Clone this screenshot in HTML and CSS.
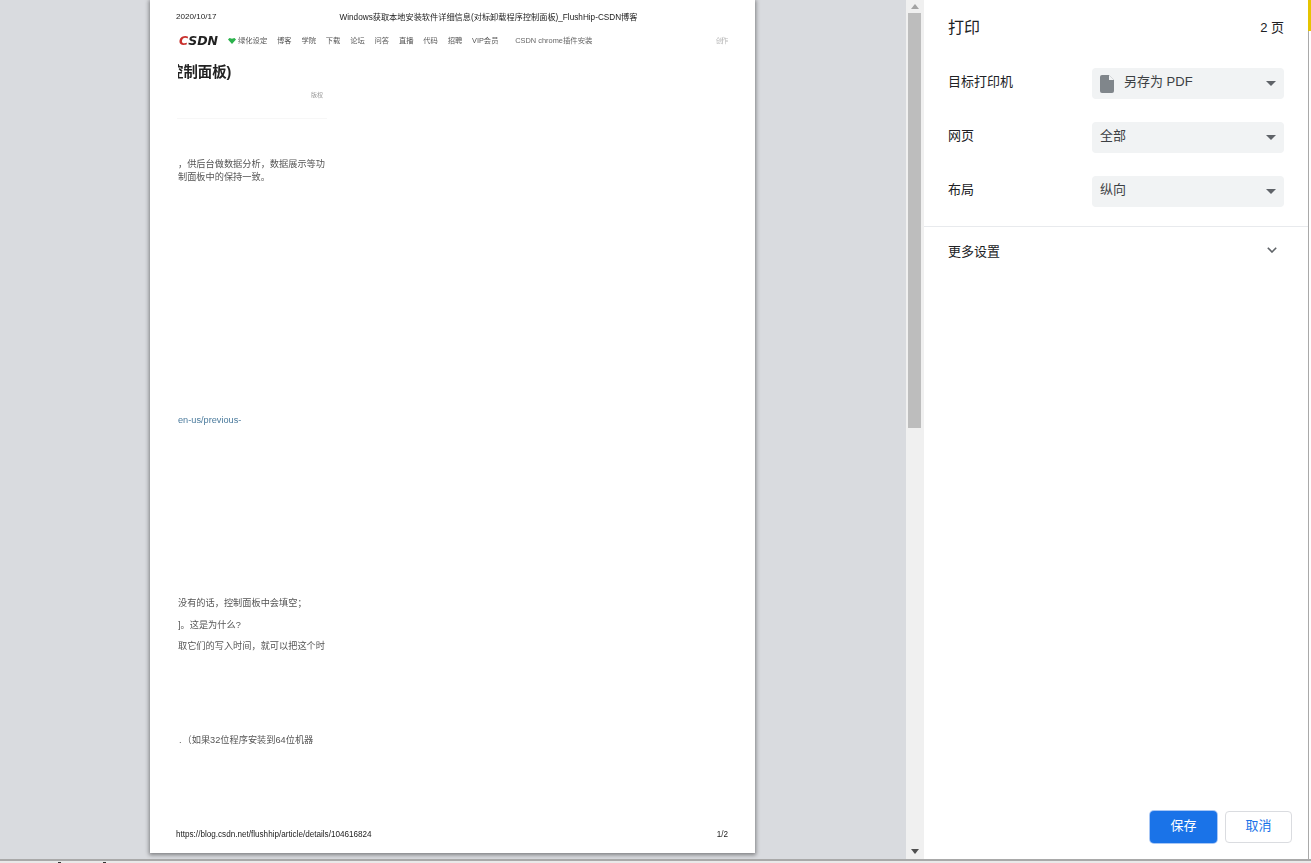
FILE: index.html
```html
<!DOCTYPE html>
<html lang="zh-CN">
<head>
<meta charset="utf-8">
<title>打印</title>
<link rel="stylesheet" href="styles.css">
</head>
<body>
<div class="window">
  <main class="preview">
    <div class="page-col">
      <article class="page">
        <div class="head"><span>2020/10/17</span><span class="doc-title">Windows获取本地安装软件详细信息(对标卸载程序控制面板)_FlushHip-CSDN博客</span></div>
        <nav class="nav">
          <span class="logo"><b class="logo-c">C</b>SDN</span>
          <svg class="heart" viewBox="0 0 8 6"><path d="M0 1.5 1.5 0 4 .8 6.5 0 8 1.5 4 6z"/></svg>
          <span class="nav-first">绿化设定</span><span>博客</span><span>学院</span><span>下载</span><span>论坛</span><span>问答</span><span>直播</span><span>代码</span><span>招聘</span><span>VIP会员</span>
          <span class="nav-search">CSDN chrome插件安装</span>
          <span class="nav-end">创作</span>
        </nav>
        <h1 class="clip title"><span>控制面板)</span></h1>
        <div class="clip rights">版权</div>
        <div class="rule"></div>
        <p class="clip line l1">，供后台做数据分析，数据展示等功</p>
        <p class="clip line l2">制面板中的保持一致。</p>
        <p class="clip line link">en-us/previous-</p>
        <p class="clip line l4">没有的话，控制面板中会填空；</p>
        <p class="clip line l5">]。这是为什么?</p>
        <p class="clip line l6">取它们的写入时间，就可以把这个时</p>
        <p class="clip line l7"><span class="dot">.</span>（如果32位程序安装到64位机器</p>
        <div class="foot"><span>https://blog.csdn.net/flushhip/article/details/104616824</span><span>1/2</span></div>
      </article>
    </div>
    <div class="scrollbar">
      <svg class="arrow" viewBox="0 0 8 5"><path d="M0 5h8L4 0z"/></svg>
      <div class="thumb"></div>
      <div class="track"></div>
      <svg class="arrow dark" viewBox="0 0 8 5"><path d="M0 0h8L4 5z"/></svg>
    </div>
  </main>
  <aside class="side">
    <header class="side-head"><h2>打印</h2><span class="count">2 页</span></header>
    <div class="rows">
      <div class="row"><label>目标打印机</label>
        <div class="select">
          <svg class="file" viewBox="0 0 14 18"><path d="M2 0h7l5 5v11a2 2 0 0 1-2 2H2a2 2 0 0 1-2-2V2a2 2 0 0 1 2-2z"/><path class="fold" d="M9 0v5h5z"/></svg>
          <span>另存为 PDF</span><svg class="caret" viewBox="0 0 10 5"><path d="M0 0h10L5 5z"/></svg>
        </div>
      </div>
      <div class="row"><label>网页</label><div class="select"><span>全部</span><svg class="caret" viewBox="0 0 10 5"><path d="M0 0h10L5 5z"/></svg></div></div>
      <div class="row"><label>布局</label><div class="select"><span>纵向</span><svg class="caret" viewBox="0 0 10 5"><path d="M0 0h10L5 5z"/></svg></div></div>
    </div>
    <div class="more"><span>更多设置</span><svg class="chev" viewBox="0 0 10 6"><path d="M.8.8 5 5 9.2.8"/></svg></div>
    <footer class="actions"><button class="save"><span>保存</span></button><button class="cancel"><span>取消</span></button></footer>
  </aside>
  <div class="edge"><div class="yellow"></div></div>
</div>
<div class="bottom"><i class="mark first"></i><i class="mark second"></i></div>
</body>
</html>
```
FILE: styles.css
```css
html, body { margin: 0; height: 100%; overflow: hidden; background: #fff; }
body { font-family: "Liberation Sans", "Noto Sans CJK SC", sans-serif; display: flex; flex-direction: column; }
.window { display: flex; height: 859px; flex: none; }
.bottom { flex: 1; background: #e9e9e9; border-top: 2px solid #a9a9a9; display: flex; align-items: flex-end; }
.mark { width: 3px; height: 1px; background: #333; }
.first { margin-left: 58px; }
.second { margin-left: 42px; }

.preview { width: 924px; display: flex; background: #d9dbdf; flex: none; }
.page-col { flex: 1; padding-left: 150px; }
.page { width: 605px; height: 853px; box-sizing: border-box; background: #fff; box-shadow: 0 1px 4px 1px rgba(0,0,0,.42); padding: 12px 27px 0 26px; color: #222; display: flex; flex-direction: column; filter: blur(.35px); }
.head { display: flex; font-size: 8.1px; line-height: 10px; color: #222; }
.doc-title { margin: 1px 0 0 123px; font-size: 8.2px; }
.nav { display: flex; align-items: center; font-size: 7.3px; line-height: 10px; color: #555; margin-top: 11px; height: 14px; padding-left: 3px; }
.nav span { margin-right: 9.8px; white-space: nowrap; }
.nav .logo { font: italic 700 12.5px/14px "DejaVu Sans", sans-serif; color: #222; width: 40px; margin-right: 9px; }
.logo-c { color: #c9302c; }
.heart { width: 8px; height: 6px; fill: #2bb24c; margin-right: 2px; }
.nav .nav-search { margin: 0 0 0 7px; color: #666; font-size: 7.4px; }
.nav .nav-end { margin: 0 2px 0 auto; color: #bbb; letter-spacing: -2.2px; }

.clip { overflow: hidden; width: 150px; margin: 0 0 0 2px; white-space: nowrap; }
.title { font-size: 14.4px; line-height: 20px; font-weight: 700; color: #222; margin-top: 14px; }
.title span { display: block; margin-left: -9px; }
.rights { font-size: 6px; line-height: 8px; color: #999; text-align: right; margin-top: 9px; width: 145px; }
.rule { width: 150px; height: 1px; background: #f7f7f7; margin: 19px 0 0 1px; }
.line { font-size: 9.2px; line-height: 13px; color: #555; }
.l1 { margin-top: 39px; }
.link { color: #4a7a9c; margin-top: 230px; }
.l4 { margin-top: 170px; }
.l5 { margin-top: 9px; }
.l6 { margin-top: 8px; }
.l7 { margin-top: 81px; }
.dot { margin: 0 1px 0 1px; }
.foot { display: flex; justify-content: space-between; font-size: 8.13px; line-height: 10px; color: #222; margin-top: auto; margin-bottom: 13px; }

.scrollbar { width: 18px; padding-right: 1px; display: flex; flex-direction: column; align-items: center; background: #f0f0f0; box-sizing: border-box; flex: none; }
.arrow { width: 8px; height: 5px; fill: #a3a3a3; margin: 4px 0; flex: none; }
.arrow.dark { fill: #505050; margin: 0 0 5px; }
.thumb { width: 13px; height: 415px; background: #bdbdbd; flex: none; }
.track { flex: 1; }

.side { width: 384px; flex: none; background: #fff; color: #202124; display: flex; flex-direction: column; font-size: 13px; }
.side-head { display: flex; justify-content: space-between; align-items: center; padding: 0 24px 2px; height: 52px; }
.side-head h2 { margin: 0; font-size: 16px; font-weight: 400; }
.count { font-size: 13px; }
.rows { display: flex; flex-direction: column; gap: 23px; padding: 14px 24px 0; }
.row { display: flex; align-items: center; justify-content: space-between; height: 31px; }
.row label { padding-bottom: 6px; }
.select { width: 192px; height: 31px; box-sizing: border-box; background: #f1f3f4; border-radius: 4px; display: flex; align-items: center; padding: 0 8px; color: #3c4043; }
.select span { padding-bottom: 6px; }
.file { width: 14px; height: 18px; margin-right: 10px; fill: #80868b; flex: none; margin-left: 0; }
.fold { fill: #f1f3f4; }
.caret { width: 10px; height: 5px; fill: #5f6368; margin-left: auto; }
.more { margin-top: 19px; border-top: 1px solid #e8eaed; height: 51px; display: flex; align-items: center; justify-content: space-between; padding: 0 31px 4px 24px; box-sizing: border-box; }
.chev { width: 10px; height: 6px; fill: none; stroke: #5f6368; stroke-width: 1.6; }
.actions { margin-top: auto; display: flex; align-items: center; gap: 8px; justify-content: flex-end; padding: 0 16px 16px 0; }
button { font-family: inherit; font-size: 13px; height: 32px; border-radius: 4px; padding: 0 0 6px; }
.save { width: 67px; background: #1a73e8; color: #fff; border: 0; box-shadow: 0 0 0 1px #a8c7f5; }
.cancel { width: 67px; background: #fff; color: #1a73e8; border: 1px solid #dadce0; }
.edge { width: 3px; flex: 1; border-left: 1px solid #a9a9a9; background: #fff; }
.yellow { height: 31px; margin-left: -1px; background: #e5c400; }
```
